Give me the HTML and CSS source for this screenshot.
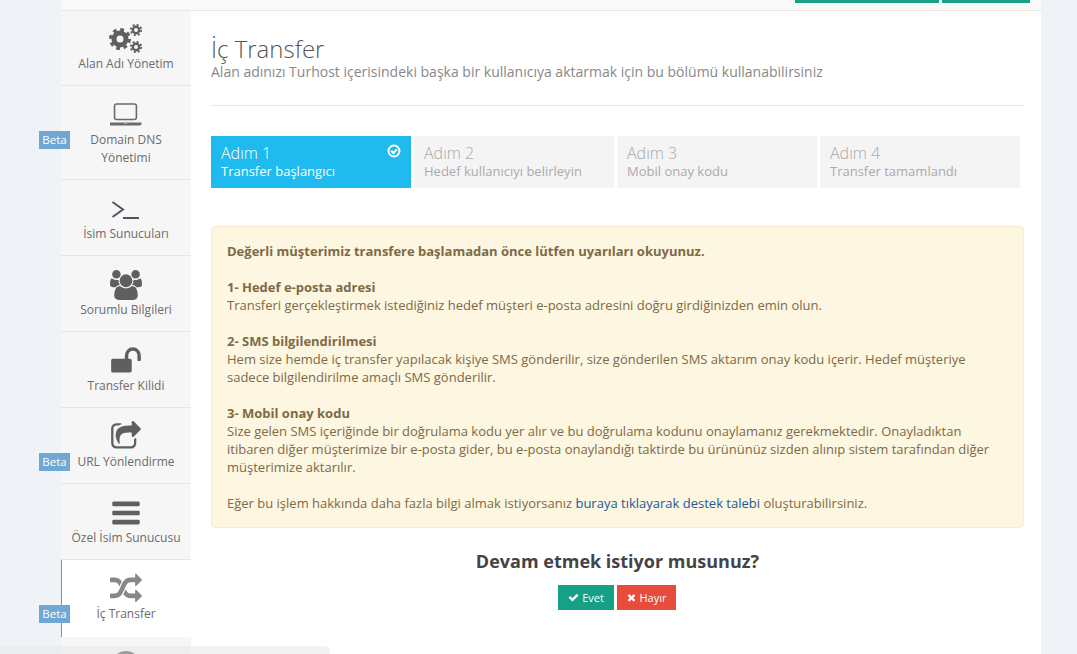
FILE: index.html
```html
<!DOCTYPE html>
<html lang="tr">
<head>
<meta charset="utf-8">
<title>İç Transfer</title>
<link rel="stylesheet" href="styles.css">
</head>
<body>
<div class="page">
  <div class="topbar"><span class="top-btn wide"></span><span class="top-btn narrow"></span></div>
  <div class="layout">
    <nav class="side">
      <a class="item first">
        <svg class="ico gears" viewBox="0 0 34 32"><g fill="none" stroke="#5f5f5f"><circle cx="11" cy="16" r="6" stroke-width="5"/><circle cx="11" cy="16" r="9.5" stroke-width="3" stroke-dasharray="3.7 3.76"/><circle cx="27" cy="7" r="3.2" stroke-width="2.4"/><circle cx="27" cy="7" r="5.2" stroke-width="1.8" stroke-dasharray="2.1 1.98"/><circle cx="27" cy="24" r="3.2" stroke-width="2.4"/><circle cx="27" cy="24" r="5.2" stroke-width="1.8" stroke-dasharray="2.1 1.98"/></g></svg>
        <span class="lbl">Alan Adı Yönetim</span>
      </a>
      <a class="item">
        <svg class="ico" viewBox="0 -60 1920 1792"><path fill="#6a6a6a" d="M384 1152q-66 0-113-47t-47-113v-704q0-66 47-113t113-47h1088q66 0 113 47t47 113v704q0 66-47 113t-113 47h-1088zm-64-864v704q0 26 19 45t45 19h1088q26 0 45-19t19-45v-704q0-26-19-45t-45-19h-1088q-26 0-45 19t-19 45zm1408 992h160v96q0 40-47 68t-113 28h-1600q-66 0-113-28t-47-68v-96h1760zm-720 96q16 0 16-16t-16-16h-160q-16 0-16 16t16 16h160z"/></svg>
        <span class="lbl">Domain DNS<br>Yönetimi</span>
        <span class="beta">Beta</span>
      </a>
      <a class="item">
        <svg class="ico" viewBox="0 0 32 32"><path fill="none" stroke="#4d5566" stroke-width="2" d="M2.5 9L13 16.5 2.5 24M13 25h16"/></svg>
        <span class="lbl">İsim Sunucuları</span>
      </a>
      <a class="item">
        <svg class="ico" viewBox="0 0 1920 1792"><path fill="#5f5f5f" d="M593 896q-162 5-265 128h-134q-82 0-138-40.5t-56-118.5q0-353 124-353 6 0 43.5 21t97.5 42.5 119 21.5q67 0 133-23-5 37-5 66 0 139 81 256zm1071 637q0 120-73 189.5t-194 69.5h-874q-121 0-194-69.5t-73-189.5q0-53 3.5-103.5t14-109 26.5-108.5 43-97.5 62-81 85.5-53.5 111.5-20q10 0 43 21.5t73 48 107 48 135 21.5 135-21.5 107-48 73-48 43-21.5q61 0 111.5 20t85.5 53.5 62 81 43 97.5 26.5 108.5 14 109 3.5 103.5zm-1024-1277q0 106-75 181t-181 75-181-75-75-181 75-181 181-75 181 75 75 181zm704 384q0 159-112.5 271.5t-271.5 112.5-271.5-112.5-112.5-271.5 112.5-271.5 271.5-112.5 271.5 112.5 112.5 271.5zm576 225q0 78-56 118.5t-138 40.5h-134q-103-123-265-128 81-117 81-256 0-29-5-66 66 23 133 23 59 0 119-21.5t97.5-42.5 43.5-21q124 0 124 353zm-128-609q0 106-75 181t-181 75-181-75-75-181 75-181 181-75 181 75 75 181z"/></svg>
        <span class="lbl">Sorumlu Bilgileri</span>
      </a>
      <a class="item">
        <svg class="ico" viewBox="0 0 1792 1792"><path fill="#5f5f5f" d="M1728 576v256q0 26-19 45t-45 19h-64q-26 0-45-19t-19-45v-256q0-106-75-181t-181-75-181 75-75 181v192h96q40 0 68 28t28 68v576q0 40-28 68t-68 28h-960q-40 0-68-28t-28-68v-576q0-40 28-68t68-28h672v-192q0-185 131.5-316.5t316.5-131.5 316.5 131.5 131.5 316.5z"/></svg>
        <span class="lbl">Transfer Kilidi</span>
      </a>
      <a class="item">
        <svg class="ico" viewBox="0 0 1792 1792"><path fill="#5f5f5f" d="M1472 989v259q0 119-84.5 203.5t-203.5 84.5h-832q-119 0-203.5-84.5t-84.5-203.5v-832q0-119 84.5-203.5t203.5-84.5h255q13 0 22.5 9.5t9.5 22.5q0 27-26 32-77 26-133 60-10 4-16 4h-112q-66 0-113 47t-47 113v832q0 66 47 113t113 47h832q66 0 113-47t47-113v-214q0-19 18-29 28-13 54-37 16-16 35-8 21 9 21 29zm237-496l-384 384q-18 19-45 19-12 0-25-5-39-17-39-59v-192h-160q-323 0-438 131-119 137-74 473 3 23-20 34-8 2-12 2-16 0-26-13-10-14-21-31t-39.5-68.5-49.5-99.5-38.5-114-17.5-122q0-49 3.5-91t14-90 28-88 47-81.5 68.5-74 94.5-61.5 124.5-48.5 159.5-30.5 196.5-11h160v-192q0-42 39-59 13-5 25-5 26 0 45 19l384 384q19 19 19 45t-19 45z"/></svg>
        <span class="lbl">URL Yönlendirme</span>
        <span class="beta">Beta</span>
      </a>
      <a class="item">
        <svg class="ico" viewBox="0 0 1792 1792"><path fill="#5f5f5f" d="M1664 1344v128q0 26-19 45t-45 19h-1408q-26 0-45-19t-19-45v-128q0-26 19-45t45-19h1408q26 0 45 19t19 45zm0-512v128q0 26-19 45t-45 19h-1408q-26 0-45-19t-19-45v-128q0-26 19-45t45-19h1408q26 0 45 19t19 45zm0-512v128q0 26-19 45t-45 19h-1408q-26 0-45-19t-19-45v-128q0-26 19-45t45-19h1408q26 0 45 19t19 45z"/></svg>
        <span class="lbl">Özel İsim Sunucusu</span>
      </a>
      <a class="item active">
        <svg class="ico" viewBox="0 0 1792 1792"><path fill="#888" d="M666 481q-60 92-137 273-22-45-37-72.5t-40.5-63.5-51-56.5-63-35-81.5-14.5h-224q-14 0-23-9t-9-23v-192q0-14 9-23t23-9h224q250 0 410 225zm1126 799q0 14-9 23l-320 320q-9 9-23 9-13 0-22.5-9.5t-9.5-22.5v-192q-32 0-85 .5t-81 1-73-1-71-5-64-10.5-63-18.5-58-28.5-59-40-55-53.5-56-69.5q59-93 136-273 22 45 37 72.5t40.5 63.5 51 56.5 63 35 81.5 14.5h256v-192q0-14 9-23t23-9q12 0 24 10l319 319q9 9 9 23zm0-896q0 14-9 23l-320 320q-9 9-23 9-13 0-22.5-9.5t-9.5-22.5v-192h-256q-48 0-87 15t-69 45-51 61.5-45 77.5q-32 62-78 171-29 66-49.5 111t-54 105-64 100-74 83-90 68.5-106.5 42-128 16.5h-224q-14 0-23-9t-9-23v-192q0-14 9-23t23-9h224q48 0 87-15t69-45 51-61.5 45-77.5q32-62 78-171 29-66 49.5-111t54-105 64-100 74-83 90-68.5 106.5-42 128-16.5h256v-192q0-14 9-23t23-9q12 0 24 10l319 319q9 9 9 23z"/></svg>
        <span class="lbl">İç Transfer</span>
        <span class="beta">Beta</span>
      </a>
      <a class="item last">
        <svg class="ico" viewBox="0 0 32 32"><circle cx="16" cy="16" r="13" fill="none" stroke="#5f5f5f" stroke-width="4"/></svg>
      </a>
    </nav>
    <main class="main">
      <h1 class="title">İç Transfer</h1>
      <p class="sub">Alan adınızı Turhost içerisindeki başka bir kullanıcıya aktarmak için bu bölümü kullanabilirsiniz</p>
      <hr class="rule">
      <ol class="steps">
        <li class="step on">
          <span class="n">Adım 1</span><span class="d">Transfer başlangıcı</span>
          <svg class="tick" viewBox="0 0 14 14"><circle cx="7" cy="7" r="5.5" fill="none" stroke="#fff" stroke-width="2"/><path fill="none" stroke="#fff" stroke-width="2" d="M4.2 6.8l2.2 2.2 3.5-3.6"/></svg>
        </li>
        <li class="step"><span class="n">Adım 2</span><span class="d">Hedef kullanıcıyı belirleyin</span></li>
        <li class="step"><span class="n">Adım 3</span><span class="d">Mobil onay kodu</span></li>
        <li class="step"><span class="n">Adım 4</span><span class="d">Transfer tamamlandı</span></li>
      </ol>
      <div class="alert">
        <b>Değerli müşterimiz transfere başlamadan önce lütfen uyarıları okuyunuz.</b><br><br>
        <b>1- Hedef e-posta adresi</b><br>
        Transferi gerçekleştirmek istediğiniz hedef müşteri e-posta adresini doğru girdiğinizden emin olun.<br><br>
        <b>2- SMS bilgilendirilmesi</b><br>
        Hem size hemde iç transfer yapılacak kişiye SMS gönderilir, size gönderilen SMS aktarım onay kodu içerir. Hedef müşteriye sadece bilgilendirilme amaçlı SMS gönderilir.<br><br>
        <b>3- Mobil onay kodu</b><br>
        Size gelen SMS içeriğinde bir doğrulama kodu yer alır ve bu doğrulama kodunu onaylamanız gerekmektedir. Onayladıktan itibaren diğer müşterimize bir e-posta gider, bu e-posta onaylandığı taktirde bu ürününüz sizden alınıp sistem tarafından diğer müşterimize aktarılır.<br><br>
        Eğer bu işlem hakkında daha fazla bilgi almak istiyorsanız <a class="link">buraya tıklayarak destek talebi</a> oluşturabilirsiniz.
      </div>
      <h2 class="ask">Devam etmek istiyor musunuz?</h2>
      <div class="btns">
        <a class="btn yes"><svg class="bi" viewBox="0 0 1792 1792"><path fill="#fff" d="M1671 566q0 40-28 68l-724 724-136 136q-28 28-68 28t-68-28l-136-136-362-362q-28-28-28-68t28-68l136-136q28-28 68-28t68 28l294 295 656-657q28-28 68-28t68 28l136 136q28 28 28 68z"/></svg>Evet</a>
        <a class="btn no"><svg class="bi" viewBox="0 0 1792 1792"><path fill="#fff" d="M1490 1322q0 40-28 68l-136 136q-28 28-68 28t-68-28l-294-294-294 294q-28 28-68 28t-68-28l-136-136q-28-28-28-68t28-68l294-294-294-294q-28-28-28-68t28-68l136-136q28-28 68-28t68 28l294 294 294-294q28-28 68-28t68 28l136 136q28 28 28 68t-28 68l-294 294 294 294q28 28 28 68z"/></svg>Hayır</a>
      </div>
    </main>
  </div>
</div>
<div class="dock"></div>
</body>
</html>
```
FILE: styles.css
```css
html, body { margin: 0; height: 100%; overflow: hidden; }
body { background: #eff3f8; font-family: "Open Sans", "Liberation Sans", sans-serif; color: #666; position: relative; }
.page { width: 980px; height: 654px; margin-left: 61px; background: #fff; }
.topbar { height: 10px; border-bottom: 1px solid #e7e7e7; background: #f9f9f9; display: flex; justify-content: flex-end; gap: 3px; padding-right: 11px; }
.top-btn { height: 3px; background: #16a085; }
.top-btn.wide { width: 144px; }
.top-btn.narrow { width: 88px; }
.layout { display: flex; }
.side { width: 130px; flex: none; }
.item { display: block; position: relative; box-sizing: border-box; background: #f6f6f6; border-bottom: 1px solid #e5e5e5; padding: 13px 0 12px; text-align: center; font-size: 12px; line-height: 18px; color: #6b6b6b; }
.item.first { padding-top: 12px; }
.item.active { background: #fff; border-bottom: 0; border-left: 1px solid #5b9bd1; padding: 13px 1px 14px 0; }
.item.last { border: 0; height: 40px; }
.ico { display: block; width: 32px; height: 32px; margin: 0 auto; }
.gears { width: 34px; }
.lbl { display: block; }
.beta { position: absolute; left: -22px; top: 45px; width: 31px; height: 18px; background: #6fa8d4; color: #fff; font-size: 11.5px; line-height: 18px; text-align: center; }
.item.active .beta { left: -23px; }
.main { flex: 1; min-width: 0; box-sizing: border-box; padding: 0 17px 0 20px; }
.title { margin: 23px 0 0; font-size: 24px; line-height: 29px; font-weight: 300; color: #555; }
.sub { margin: 1px 0 0; font-size: 14px; line-height: 16px; color: #888; }
.rule { margin: 25px 0 30px; border: 0; border-top: 1px solid #e7e7e7; }
.steps { list-style: none; margin: 0; padding: 0; display: flex; gap: 3px; }
.step { position: relative; box-sizing: border-box; width: 200px; height: 52px; padding: 7px 10px 0; background: #f4f4f4; color: #aaa; display: flex; flex-direction: column; }
.step .n { font-size: 16px; line-height: 20px; font-weight: 300; }
.step .d { font-size: 13px; line-height: 17px; }
.step.on { background: #1fbaee; color: #fff; }
.tick { position: absolute; top: 8px; right: 10px; width: 14px; height: 14px; }
.alert { margin-top: 38px; padding: 15px; border: 1px solid #faebcc; border-radius: 4px; background: #fdf6e0; color: #7d6a47; font-size: 13px; line-height: 18px; }
.link { color: #1a5a96; }
.ask { margin: 21px 0 0; text-align: center; font-size: 18px; line-height: 24px; font-weight: 700; color: #444; }
.btns { margin-top: 12px; padding-right: 1px; display: flex; justify-content: center; gap: 3px; }
.btn { display: flex; align-items: center; justify-content: center; gap: 3px; height: 25px; font-size: 11px; color: #fff; }
.yes { background: #16a085; width: 56px; }
.no { background: #e74c3c; width: 59px; gap: 2px; }
.bi { width: 11px; height: 11px; }
.dock { position: absolute; left: 0; bottom: 0; width: 330px; height: 8px; border-top-right-radius: 6px; background: rgba(228,228,228,.45); }
```
